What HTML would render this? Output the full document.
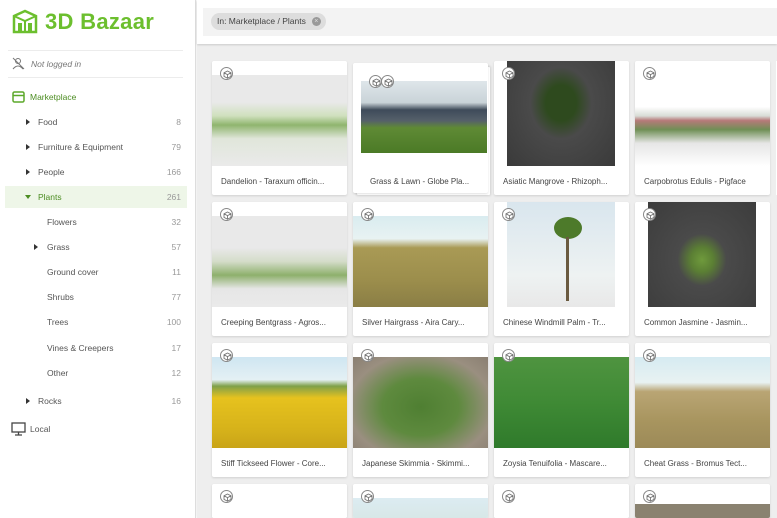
<!DOCTYPE html>
<html><head><meta charset="utf-8"><style>
*{margin:0;padding:0;box-sizing:border-box}
html,body{width:777px;height:518px;overflow:hidden}
body{background:#fff;font-family:"Liberation Sans",sans-serif;position:relative}
.side{position:absolute;left:0;top:0;width:196px;height:518px;background:#fff;border-right:1px solid #ddd;box-shadow:1px 0 3px rgba(0,0,0,.08)}
.logo{position:absolute;left:45px;top:9px;font-size:22px;color:#6cbf2e;font-weight:bold;letter-spacing:.3px}
.hr{position:absolute;left:8px;width:175px;height:1px;background:#ececec}
.it{position:absolute;left:0;width:187px;height:22px;font-size:8.5px;color:#555;line-height:22px}
.it .n{position:absolute;right:6px;color:#999}
.tri{position:absolute;width:0;height:0;border-top:3px solid transparent;border-bottom:3px solid transparent;border-left:4px solid #333;top:8px}
.main{position:absolute;left:197px;top:0;width:580px;height:518px;background:#eeeeee}
.top{position:absolute;left:0;top:0;right:0;height:44px;background:#fff;box-shadow:0 1px 2px rgba(0,0,0,.15)}
.search{position:absolute;left:6px;top:8px;right:0;height:28px;background:#f3f3f3}
.chip{position:absolute;left:8px;top:5px;height:17px;border-radius:9px;background:#ddd;font-size:8.5px;color:#444;line-height:17px;padding:0 20px 0 6px}
.chip i{position:absolute;right:5px;top:4px;width:9px;height:9px;border-radius:50%;background:#999;color:#ddd;font-size:7px;line-height:9px;text-align:center;font-style:normal}
.card{position:absolute;width:135px;height:134px;background:#fff;border-radius:2px;box-shadow:0 1px 2px rgba(0,0,0,.12);overflow:hidden}
.img{position:absolute;left:0;top:14px;width:135px;height:91px}
.lbl{position:absolute;left:9px;top:116px;font-size:8px;color:#444;white-space:nowrap}
.ic{position:absolute;left:8px;top:6px;width:13px;height:13px;border-radius:50%;background:#fff;border:1px solid #888}
.ic svg{position:absolute;left:2px;top:2px}
</style></head><body>
<svg width="0" height="0" style="position:absolute;left:0;top:0"><symbol id="cube" viewBox="0 0 9 9"><path d="M4.5 1 L8 2.8 L8 6.4 L4.5 8.2 L1 6.4 L1 2.8 Z M1 2.8 L4.5 4.6 L8 2.8 M4.5 4.6 V8.2" fill="none" stroke="#777" stroke-width="0.9"/></symbol></svg>
<div class="side">
<svg style="position:absolute;left:11px;top:9px" width="28" height="26" viewBox="0 0 28 26"><path d="M3 7 L14 2 L25 7 L25 23 L3 23 Z" fill="none" stroke="#6cbf2e" stroke-width="2.5"/><path d="M3 7 L14 12 L25 7 M14 12 L14 23" stroke="#6cbf2e" stroke-width="2" fill="none"/><rect x="7" y="14" width="4" height="8" fill="#6cbf2e"/><rect x="17" y="14" width="4" height="8" fill="#6cbf2e"/></svg>
<div class="logo">3D Bazaar</div>
<div class="hr" style="top:50px"></div>
<svg style="position:absolute;left:12px;top:57px" width="13" height="13" viewBox="0 0 13 13"><circle cx="6" cy="4" r="2.5" fill="none" stroke="#777"/><path d="M1 12 Q6 6 11 12" fill="none" stroke="#777"/><path d="M1 1 L12 12" stroke="#777"/></svg>
<div style="position:absolute;left:31px;top:59px;font-size:8.5px;color:#777;font-style:italic">Not logged in</div>
<div class="hr" style="top:77px"></div>
<svg style="position:absolute;left:12px;top:91px" width="13" height="12" viewBox="0 0 13 12"><rect x="1" y="1" width="11" height="10" rx="1.5" fill="none" stroke="#5ca82a" stroke-width="1.5"/><path d="M1 4.5 H12" stroke="#5ca82a" stroke-width="1.5"/></svg>
<div style="position:absolute;left:30px;top:92px;font-size:8.5px;color:#4c8d22">Marketplace</div>
<div class="it" style="top:111px"><span class="tri" style="left:26px"></span><span style="position:absolute;left:38px">Food</span><span class="n">8</span></div>
<div class="it" style="top:136px"><span class="tri" style="left:26px"></span><span style="position:absolute;left:38px">Furniture &amp; Equipment</span><span class="n">79</span></div>
<div class="it" style="top:161px"><span class="tri" style="left:26px"></span><span style="position:absolute;left:38px">People</span><span class="n">166</span></div>
<div class="it" style="top:186px;left:5px;width:182px;background:#eef6e8;color:#4c8d22"><span style="position:absolute;left:20px;top:9px;border-left:3px solid transparent;border-right:3px solid transparent;border-top:4px solid #4c8d22"></span><span style="position:absolute;left:33px">Plants</span><span class="n" style="right:6px">261</span></div>
<div class="it" style="top:211px"><span style="position:absolute;left:47px">Flowers</span><span class="n">32</span></div>
<div class="it" style="top:236px"><span class="tri" style="left:34px"></span><span style="position:absolute;left:47px">Grass</span><span class="n">57</span></div>
<div class="it" style="top:261px"><span style="position:absolute;left:47px">Ground cover</span><span class="n">11</span></div>
<div class="it" style="top:286px"><span style="position:absolute;left:47px">Shrubs</span><span class="n">77</span></div>
<div class="it" style="top:311px"><span style="position:absolute;left:47px">Trees</span><span class="n">100</span></div>
<div class="it" style="top:337px"><span style="position:absolute;left:47px">Vines &amp; Creepers</span><span class="n">17</span></div>
<div class="it" style="top:362px"><span style="position:absolute;left:47px">Other</span><span class="n">12</span></div>
<div class="it" style="top:390px"><span class="tri" style="left:26px"></span><span style="position:absolute;left:38px">Rocks</span><span class="n">16</span></div>
<svg style="position:absolute;left:11px;top:422px" width="15" height="14" viewBox="0 0 15 14"><rect x="1" y="1" width="13" height="9" fill="none" stroke="#444" stroke-width="1.3"/><path d="M7.5 10 V13 M4 13 H11" stroke="#444" stroke-width="1.3"/></svg>
<div style="position:absolute;left:30px;top:424px;font-size:8.5px;color:#555">Local</div>
</div>
<div class="main">
<div class="top"><div class="search"><div class="chip">In: Marketplace / Plants<i>×</i></div></div></div>
<div style="position:absolute;left:579px;top:61px;width:1px;height:134px;background:#fff"></div>
</div>

<!-- Row 1 -->
<div class="card" style="left:212px;top:61px"><div class="img" style="background:linear-gradient(#e9e9e9 0,#e9e9e9 30%,#cfe0bd 45%,#8fb56e 55%,#e0e6da 70%,#eaeaea 100%)"></div><div class="ic"><svg width="9" height="9"><use href="#cube"/></svg></div><div class="lbl">Dandelion - Taraxum officin...</div></div>
<div class="card" style="left:353px;top:63px;height:130px;overflow:visible;box-shadow:0 1px 2px rgba(0,0,0,.12),3px 3px 0 -1px #fff,3px 3px 2px rgba(0,0,0,.12)"><div class="img" style="left:8px;top:18px;width:126px;height:72px;background:linear-gradient(#dfe6ea 0,#c9d3d8 30%,#3f4b5a 40%,#55606a 55%,#5f8a35 65%,#4b7a26 100%)"></div><div class="ic" style="left:16px;top:12px"><svg width="9" height="9"><use href="#cube"/></svg></div><div class="ic" style="left:28px;top:12px"><svg width="9" height="9"><use href="#cube"/></svg></div><div class="lbl" style="left:17px;top:114px">Grass &amp; Lawn - Globe Pla...</div></div>
<div class="card" style="left:494px;top:61px"><div class="img" style="left:13px;top:0;width:108px;height:105px;background:radial-gradient(ellipse at 50% 40%,#2e4a1e 0,#2e4a1e 20%,#4a4a4a 40%,#3a3a3a 100%)"></div><div class="ic"><svg width="9" height="9"><use href="#cube"/></svg></div><div class="lbl">Asiatic Mangrove - Rhizoph...</div></div>
<div class="card" style="left:635px;top:61px"><div class="img" style="background:linear-gradient(#fff 0,#fff 35%,#d8dcd6 45%,#b77a7a 50%,#6f8f55 60%,#e6e6e6 75%,#fff 100%)"></div><div class="ic"><svg width="9" height="9"><use href="#cube"/></svg></div><div class="lbl">Carpobrotus Edulis - Pigface</div></div>
<!-- Row 2 -->
<div class="card" style="left:212px;top:202px"><div class="img" style="background:linear-gradient(#e9e9e9 0,#e9e9e9 35%,#d4dcc9 50%,#8eb06c 65%,#e6e6e6 80%,#eaeaea 100%)"></div><div class="ic"><svg width="9" height="9"><use href="#cube"/></svg></div><div class="lbl">Creeping Bentgrass - Agros...</div></div>
<div class="card" style="left:353px;top:202px"><div class="img" style="background:linear-gradient(#d9ecf0 0,#e8f2f2 25%,#a99a55 35%,#9c8e4c 70%,#8a7e45 100%)"></div><div class="ic"><svg width="9" height="9"><use href="#cube"/></svg></div><div class="lbl">Silver Hairgrass - Aira Cary...</div></div>
<div class="card" style="left:494px;top:202px"><div class="img" style="left:13px;top:0;width:108px;height:105px;background:linear-gradient(#d9e6ee,#eef2f2 70%,#e8e8e8)"></div><div style="position:absolute;left:60px;top:15px;width:28px;height:22px;border-radius:50%;background:#4d7a2a"></div><div style="position:absolute;left:72px;top:35px;width:3px;height:64px;background:#6a5a40"></div><div class="ic"><svg width="9" height="9"><use href="#cube"/></svg></div><div class="lbl">Chinese Windmill Palm - Tr...</div></div>
<div class="card" style="left:635px;top:202px"><div class="img" style="left:13px;top:0;width:108px;height:105px;background:radial-gradient(ellipse at 50% 55%,#6f9a3c 0,#5b7f34 15%,#4a4a4a 32%,#3c3c3c 100%)"></div><div class="ic"><svg width="9" height="9"><use href="#cube"/></svg></div><div class="lbl">Common Jasmine - Jasmin...</div></div>
<!-- Row 3 -->
<div class="card" style="left:212px;top:343px"><div class="img" style="background:linear-gradient(#cfe6f2 0,#e4f0f4 25%,#7fa04a 32%,#e6c21e 45%,#d6b21a 80%,#c9a418 100%)"></div><div class="ic"><svg width="9" height="9"><use href="#cube"/></svg></div><div class="lbl">Stiff Tickseed Flower - Core...</div></div>
<div class="card" style="left:353px;top:343px"><div class="img" style="background:radial-gradient(ellipse at 50% 55%,#4f7f32 0,#5e8a3e 40%,#9a8f80 75%,#8a7f72 100%)"></div><div class="ic"><svg width="9" height="9"><use href="#cube"/></svg></div><div class="lbl">Japanese Skimmia - Skimmi...</div></div>
<div class="card" style="left:494px;top:343px"><div class="img" style="background:linear-gradient(#4f9440,#3f8a35 50%,#2f7a2b)"></div><div class="ic"><svg width="9" height="9"><use href="#cube"/></svg></div><div class="lbl">Zoysia Tenuifolia - Mascare...</div></div>
<div class="card" style="left:635px;top:343px"><div class="img" style="background:linear-gradient(#d6ebf2 0,#e8f2f2 28%,#b9a574 38%,#a8955f 70%,#9c8a58 100%)"></div><div class="ic"><svg width="9" height="9"><use href="#cube"/></svg></div><div class="lbl">Cheat Grass - Bromus Tect...</div></div>
<!-- Row 4 -->
<div class="card" style="left:212px;top:484px;height:34px"><div class="img" style="background:#fff"></div><div class="ic"><svg width="9" height="9"><use href="#cube"/></svg></div></div>
<div class="card" style="left:353px;top:484px;height:34px"><div class="img" style="background:linear-gradient(#dcecf2,#c9d6c0)"></div><div class="ic"><svg width="9" height="9"><use href="#cube"/></svg></div></div>
<div class="card" style="left:494px;top:484px;height:34px"><div class="img" style="background:#fff"></div><div class="ic"><svg width="9" height="9"><use href="#cube"/></svg></div></div>
<div class="card" style="left:635px;top:484px;height:34px"><div class="img" style="top:20px;background:#8a8270"></div><div class="ic"><svg width="9" height="9"><use href="#cube"/></svg></div></div>
</body></html>
